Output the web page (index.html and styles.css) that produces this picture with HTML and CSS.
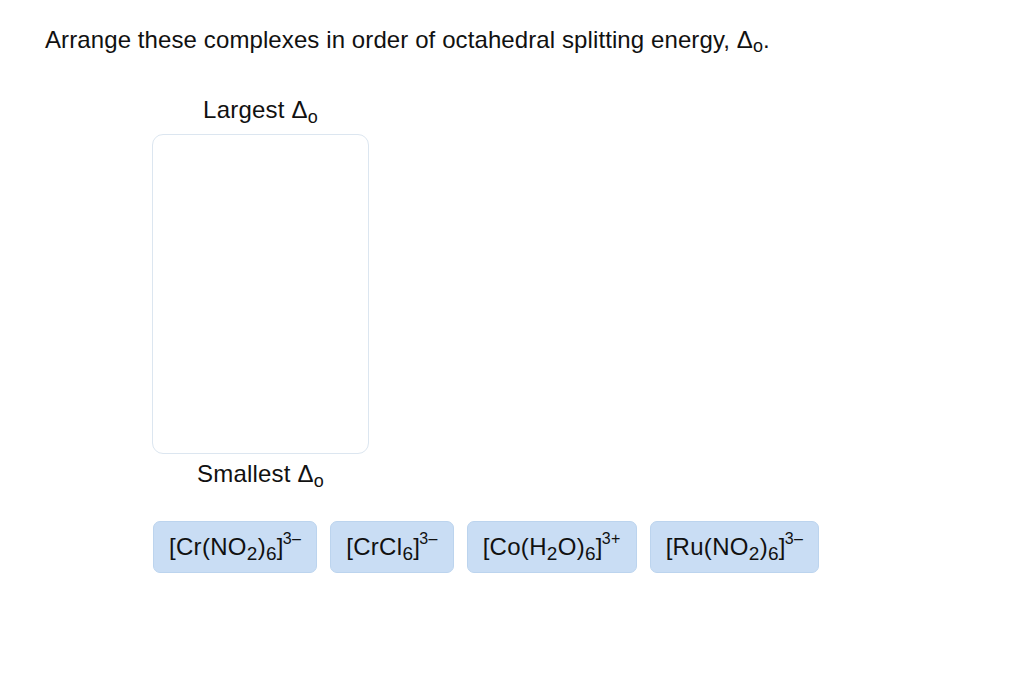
FILE: index.html
```html
<!DOCTYPE html>
<html lang="en">
<head>
    <meta charset="UTF-8">
    <meta name="viewport" content="width=device-width, initial-scale=1.0">
    <title>Octahedral splitting</title>
    <link rel="stylesheet" href="styles.css">
</head>
<body>
    <div class="container">
        <p class="question">Arrange these complexes in order of octahedral splitting energy, &Delta;<sub>o</sub>.</p>
        <section class="rank">
            <div class="rank-label">Largest &Delta;<sub>o</sub></div>
            <div class="drop-box"></div>
            <div class="rank-label">Smallest &Delta;<sub>o</sub></div>
        </section>
        <section class="chips">
            <div class="chip"><span>[Cr(NO<sub>2</sub>)<sub>6</sub>]<sup>3&ndash;</sup></span></div>
            <div class="chip"><span>[CrCl<sub>6</sub>]<sup>3&ndash;</sup></span></div>
            <div class="chip"><span>[Co(H<sub>2</sub>O)<sub>6</sub>]<sup>3+</sup></span></div>
            <div class="chip"><span>[Ru(NO<sub>2</sub>)<sub>6</sub>]<sup>3&ndash;</sup></span></div>
        </section>
    </div>
</body>
</html>
```

FILE: styles.css
```css
*{margin: 0;padding: 0;box-sizing: border-box}
body{font-family: "Liberation Sans", Arial, sans-serif;color: #111;background: #fff;}
sub,sup{line-height: 0;}
.container{padding: 26px 0 0 45px;}
.question{font-size: 24px;line-height: 28px;letter-spacing: 0.1px;}
.question sub{font-size: 18px;vertical-align: -4px;}

.rank{display: flex;flex-direction: column;align-items: center;width: 217px;margin: 42px 0 0 107px;}
.rank-label{font-size: 24px;line-height: 28px;letter-spacing: 0.2px;}
.rank-label sub{font-size: 18px;vertical-align: -5px;}
.drop-box{width: 217px;height: 320px;border: 1px solid #dce6f0;border-radius: 11px;margin: 10px 0 6px;}

.chips{display: flex;gap: 13px;margin: 33px 0 0 108px;}
.chip{height: 52px;padding: 0 15px;display: flex;align-items: center;background: #c9ddf4;border: 1px solid #bcd4ee;border-radius: 7px;font-size: 24px;letter-spacing: 0.3px;}
.chip sub{font-size: 19px;vertical-align: -5px;}
.chip sup{font-size: 16px;vertical-align: 11px;margin-left: -1px;}
```
